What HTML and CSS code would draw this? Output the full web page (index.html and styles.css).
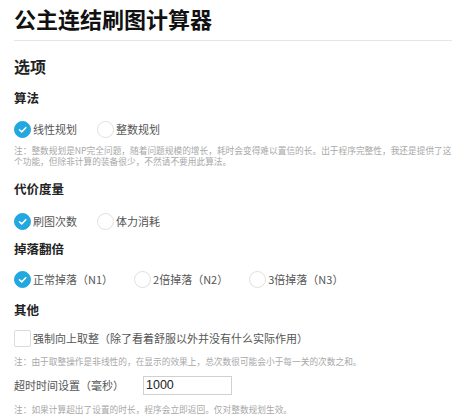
FILE: index.html
```html
<!DOCTYPE html>
<html>
	<head>
		<meta charset="utf-8">
		<title>公主连结刷图计算器</title>
		<link rel="stylesheet" href="styles.css">
	</head>
	<body>
		<div class="page">
			<h1 class="title">公主连结刷图计算器</h1>
			<h2 class="subtitle">选项</h2>

			<h3 class="group first">算法</h3>
			<div class="choices row1">
				<label class="choice"><span class="radio on"><svg viewBox="0 0 17 17"><polyline points="5,8.7 7.6,11.2 12.2,6.4"/></svg></span>线性规划</label>
				<label class="choice"><span class="radio"></span>整数规划</label>
			</div>
			<p class="note note1">注：整数规划是NP完全问题，随着问题规模的增长，耗时会变得难以置信的长。出于程序完整性，我还是提供了这个功能，但除非计算的装备很少，不然请不要用此算法。</p>

			<h3 class="group g2">代价度量</h3>
			<div class="choices row2">
				<label class="choice"><span class="radio on"><svg viewBox="0 0 17 17"><polyline points="5,8.7 7.6,11.2 12.2,6.4"/></svg></span>刷图次数</label>
				<label class="choice"><span class="radio"></span>体力消耗</label>
			</div>

			<h3 class="group g3">掉落翻倍</h3>
			<div class="choices row3">
				<label class="choice wide"><span class="radio on"><svg viewBox="0 0 17 17"><polyline points="5,8.7 7.6,11.2 12.2,6.4"/></svg></span>正常掉落（N1）</label>
				<label class="choice wide"><span class="radio"></span>2倍掉落（N2）</label>
				<label class="choice wide"><span class="radio"></span>3倍掉落（N3）</label>
			</div>

			<h3 class="group g4">其他</h3>
			<div class="choices row4">
				<label class="choice"><span class="check"></span>强制向上取整（除了看着舒服以外并没有什么实际作用）</label>
			</div>
			<p class="note note2">注：由于取整操作是非线性的，在显示的效果上，总次数很可能会小于每一关的次数之和。</p>

			<div class="timeout">
				<span class="timeout-label">超时时间设置（毫秒）</span>
				<input class="timeout-input" type="text" value="1000">
			</div>
			<p class="note note3">注：如果计算超出了设置的时长，程序会立即返回。仅对整数规划生效。</p>
		</div>
	</body>
</html>
```

FILE: styles.css
```css
*{
	margin: 0;
	padding: 0;
	box-sizing: border-box;
}
body{
	font-family: "Noto Sans CJK SC", "Noto Sans", sans-serif;
	color: #222;
	background-color: white;
}
.page{
	padding: 0 22px 0 14px;
}
.title{
	font-size: 22px;
	font-weight: bold;
	line-height: 26px;
	padding: 5px 0 9px;
	border-bottom: 1px solid #e6e6e6;
	color: #111;
}
.subtitle{
	font-size: 16px;
	font-weight: bold;
	line-height: 20px;
	margin-top: 15px;
}
.group{
	font-size: 12.5px;
	font-weight: bold;
	line-height: 18px;
}
.group.first{
	margin-top: 13px;
}
.g2{
	margin-top: 13px;
}
.g3{
	margin-top: 9px;
}
.g4{
	margin-top: 12px;
}
.choices{
	display: flex;
	align-items: center;
	height: 20px;
	font-size: 11px;
	color: #555;
}
.row1{
	margin-top: 12px;
}
.row2{
	margin-top: 13px;
}
.row3{
	margin-top: 11px;
}
.row4{
	margin-top: 9px;
}
.choice{
	display: flex;
	align-items: center;
	gap: 2px;
	margin-right: 20px;
	line-height: 20px;
}
.choice.wide{
	margin-right: 21px;
}
.radio{
	display: inline-block;
	width: 17px;
	height: 17px;
	border: 1px solid #e0e0e0;
	border-radius: 50%;
	background-color: white;
}
.radio.on{
	border-color: #22a7e0;
	background-color: #22a7e0;
}
.radio svg{
	display: block;
	width: 15px;
	height: 15px;
	fill: none;
	stroke: white;
	stroke-width: 1.7;
	stroke-linecap: round;
	stroke-linejoin: round;
}
.check{
	display: inline-block;
	width: 17px;
	height: 17px;
	border: 1px solid #dcdcdc;
	border-radius: 2px;
	background-color: white;
}
.note{
	font-size: 8.7px;
	line-height: 11px;
	color: #a8a8a8;
}
.note1{
	margin-top: 6px;
}
.note2{
	margin-top: 8px;
}
.note3{
	margin-top: 9px;
}
.timeout{
	display: flex;
	align-items: center;
	height: 20px;
	margin-top: 8px;
	font-size: 11px;
	color: #555;
}
.timeout-label{
	width: 129px;
}
.timeout-input{
	width: 89px;
	height: 19px;
	border: 1px solid #d0d0d0;
	padding-left: 2px;
	font-family: "Liberation Sans", Arial, sans-serif;
	font-size: 12.5px;
	color: #222;
	outline: none;
}
```
